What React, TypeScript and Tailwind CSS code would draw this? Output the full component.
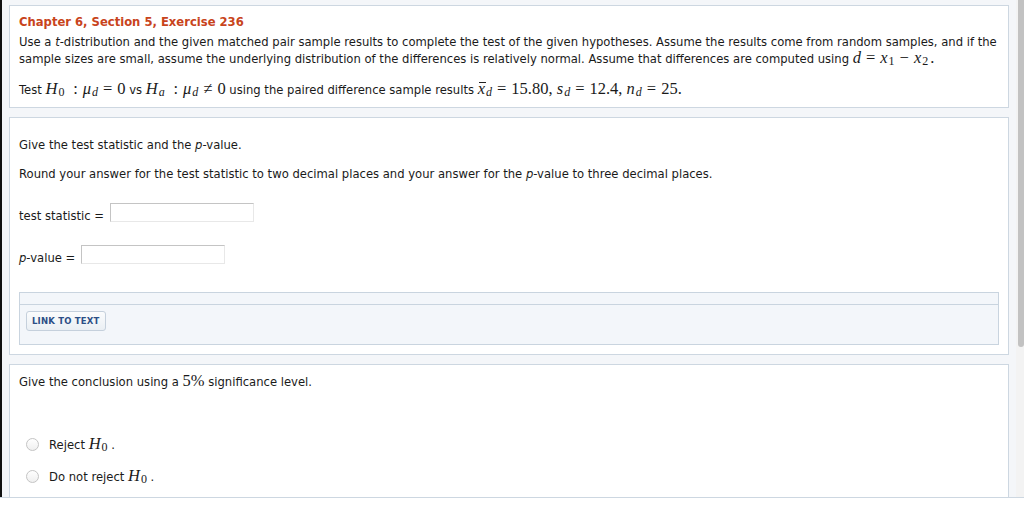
import React from 'react';

const serif = "font-['Liberation_Serif',_'Times_New_Roman',serif]";

const V = ({ children }: { children: React.ReactNode }) => (
  <span className={`${serif} italic text-[16.5px]`}>{children}</span>
);

const N = ({ children }: { children: React.ReactNode }) => (
  <span className={`${serif} text-[16.5px]`}>{children}</span>
);

const Sub = ({ children, italic = false }: { children: React.ReactNode; italic?: boolean }) => (
  <sub className={`${serif} ${italic ? 'italic' : ''} text-[12px] relative top-[2px] align-baseline ml-[1px]`}>{children}</sub>
);

const Op = ({ children }: { children: React.ReactNode }) => (
  <span className={`${serif} text-[16.5px] mx-[5px]`}>{children}</span>
);

const H0 = () => (
  <>
    <V>H</V>
    <Sub>0</Sub>
  </>
);

const XBar = () => (
  <span className={`${serif} italic text-[16.5px] relative inline-block`}>
    <span className="absolute left-[1px] top-[3px] w-[7px] h-[1px] bg-[#222]" />
    x
  </span>
);

const Radio = ({ children }: { children: React.ReactNode }) => (
  <label className="flex items-center h-[18px]">
    <span className="ml-[7px] w-[13px] h-[13px] rounded-full border border-[#c4c4c4] bg-gradient-to-b from-white to-[#efefef]" />
    <span className="ml-[10px]">{children}</span>
  </label>
);

export default function App() {
  return (
    <div className="w-[1024px] h-[505px] overflow-hidden flex flex-col bg-white text-[11.6px] leading-[15px] text-[#1a1a1a] font-['DejaVu_Sans',Verdana,sans-serif]">
      <div className="flex h-[497px] bg-[#f4f6f9]">
        <div className="w-[2px] bg-[#111]" />
        <div className="flex-1 flex flex-col gap-[9px] pl-[7px] pr-[7px] pt-[5px]">
          {/* problem statement */}
          <div className="w-[1000px] border border-[#cdd7e1] bg-white px-[9px] pt-[9px] pb-[7px]">
            <h2 className="font-bold text-[#c8441c]">Chapter 6, Section 5, Exercise 236</h2>
            <p className="mt-[5px]">
              Use a <i>t</i>-distribution and the given matched pair sample results to complete the test of the given hypotheses. Assume the results come from random samples, and if the
              <br />
              sample sizes are small, assume the underlying distribution of the differences is relatively normal. Assume that differences are computed using{' '}
              <V>d</V>
              <Op>=</Op>
              <V>x</V>
              <Sub>1</Sub>
              <Op>−</Op>
              <V>x</V>
              <Sub>2</Sub>
              <span className={`${serif} text-[16.5px] ml-[2px]`}>.</span>
            </p>
            <p className="mt-[12px] leading-[19px]">
              Test <H0 /> <Op>:</Op>
              <V>μ</V>
              <Sub italic>d</Sub>
              <Op>=</Op>
              <N>0</N> vs <V>H</V>
              <Sub italic>a</Sub> <Op>:</Op>
              <V>μ</V>
              <Sub italic>d</Sub>
              <Op>≠</Op>
              <N>0</N> using the paired difference sample results <XBar />
              <Sub italic>d</Sub>
              <Op>=</Op>
              <N>15.80, </N>
              <V>s</V>
              <Sub italic>d</Sub>
              <Op>=</Op>
              <N>12.4, </N>
              <V>n</V>
              <Sub italic>d</Sub>
              <Op>=</Op>
              <N>25.</N>
            </p>
          </div>

          {/* test statistic and p-value */}
          <div className="w-[1000px] border border-[#cdd7e1] bg-white px-[9px] pt-[20px] pb-[9px]">
            <p>
              Give the test statistic and the <i>p</i>-value.
            </p>
            <p className="mt-[14px]">
              Round your answer for the test statistic to two decimal places and your answer for the <i>p</i>-value to three decimal places.
            </p>
            <div className="mt-[21px] flex items-end gap-[6px]">
              <span className="leading-[11px]">test statistic =</span>
              <input className="w-[144px] h-[19px] border border-[#e8e8e8] border-t-[#c4c4c4] border-l-[#c4c4c4] bg-white outline-none" />
            </div>
            <div className="mt-[23px] flex items-end gap-[6px]">
              <span className="leading-[11px]">
                <i>p</i>-value =
              </span>
              <input className="w-[144px] h-[19px] border border-[#e8e8e8] border-t-[#c4c4c4] border-l-[#c4c4c4] bg-white outline-none" />
            </div>
            <div className="mt-[28px] border border-[#c9d4df] bg-[#f3f6fa]">
              <div className="h-[12px] border-b border-[#c9d4df]" />
              <div className="px-[6px] pt-[6px] pb-[13px]">
                <button className="h-[20px] px-[5px] rounded-[3px] border border-[#c5d0dc] bg-gradient-to-b from-[#fbfcfd] to-[#eaeff4] text-[8.5px] font-bold tracking-[0.2px] text-[#2c4f86]">
                  LINK TO TEXT
                </button>
              </div>
            </div>
          </div>

          {/* conclusion */}
          <div className="w-[1000px] flex-1 border border-[#cdd7e1] border-b-0 bg-white px-[9px] pt-[6px]">
            <p className="leading-[19px]">
              Give the conclusion using a <N>5%</N> significance level.
            </p>
            <div className="mt-[43px] flex flex-col gap-[14px]">
              <Radio>
                Reject <H0 /> .
              </Radio>
              <Radio>
                Do not reject <H0 /> .
              </Radio>
            </div>
          </div>
        </div>
        <div className="w-[8px] bg-[#f3f3f3] pl-[2px]">
          <div className="w-[6px] h-[347px] rounded-b-[4px] bg-[#c2c2c2]" />
        </div>
      </div>
      <div className="border-t border-[#cdd7e1] flex-1 bg-white" />
    </div>
  );
}
